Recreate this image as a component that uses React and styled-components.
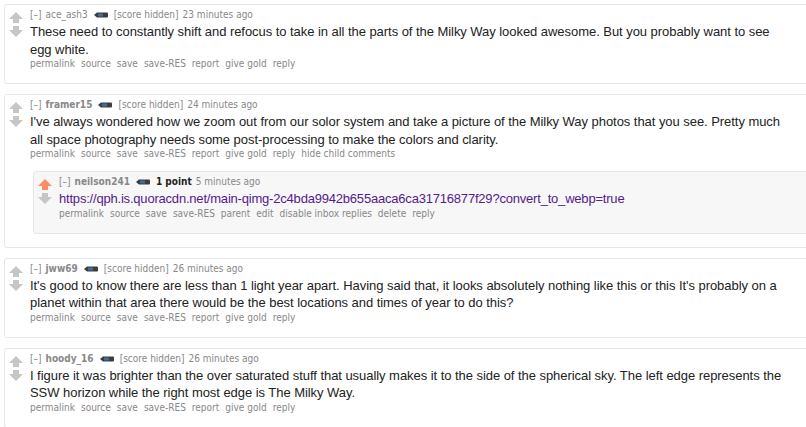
import React from 'react';
import styled, { createGlobalStyle } from 'styled-components';

const GlobalStyle = createGlobalStyle`
  html, body {
    margin: 0;
    padding: 0;
    background: #fff;
    overflow: hidden;
  }
`;

const Page = styled.div`
  width: 812px;
  padding: 4px 0 0 4px;
  box-sizing: border-box;
`;

const Card = styled.div`
  display: flex;
  border: 1px solid #e6e6e6;
  border-radius: 3px;
  background: ${p => (p.nested ? '#f7f7f7' : '#fff')};
  margin: ${p => (p.nested ? '11px 0 0 3px' : '0 0 10px 0')};
  padding-bottom: 13px;
`;

const Votes = styled.div`
  display: flex;
  flex-direction: column;
  gap: 3px;
  width: 14px;
  margin: 7px 7px 0 4px;
  flex-shrink: 0;
`;

const Entry = styled.div`
  flex: 1;
  min-width: 0;
  padding-top: 3px;
`;

const Tagline = styled.div`
  font-family: "DejaVu Sans Condensed", "DejaVu Sans", sans-serif;
  font-size: 10px;
  line-height: 14px;
  color: #888;
  display: flex;
  align-items: center;
  white-space: nowrap;
`;

const Toggle = styled.span`
  margin-right: 4px;
`;

const Author = styled.span`
  font-weight: ${p => (p.$light ? 'normal' : 'bold')};
  color: #888;
`;

const Score = styled.span`
  margin-left: 3px;
  font-weight: ${p => (p.$hidden ? 'normal' : 'bold')};
  color: ${p => (p.$hidden ? '#888' : '#222')};
`;

const Time = styled.span`
  margin-left: 4px;
`;

const Body = styled.div`
  margin-top: 1px;
  font-family: "Liberation Sans", Arial, sans-serif;
  font-size: 13px;
  line-height: 17.55px;
  letter-spacing: -0.05px;
  color: #222;
  max-width: 759px;
`;

const Link = styled.a`
  color: #551a8b;
  text-decoration: none;
  letter-spacing: -0.2px;
`;

const Buttons = styled.ul`
  list-style: none;
  margin: 0;
  padding: 0;
  display: flex;
  gap: 6px;
  font-family: "DejaVu Sans Condensed", "DejaVu Sans", sans-serif;
  font-size: 10px;
  line-height: 12px;
  color: #888;
  white-space: nowrap;
`;

const Arrow = ({ down, color }) => (
  <svg width="14" height="11" viewBox="0 0 14 11" style={{ display: 'block', transform: down ? 'scaleY(-1)' : 'none' }}>
    <path d="M7 0 L14 7 H10 V11 H4 V7 H0 Z" fill={color} />
  </svg>
);

const TagIcon = () => (
  <svg width="14" height="6" viewBox="0 0 14 6" style={{ margin: '0 3px 0 6px', display: 'block' }}>
    <path d="M0 3 L3 0.5 H13 Q14 0.5 14 1.5 V4.5 Q14 5.5 13 5.5 H3 Z" fill="#3c3c3c" />
    <rect x="4" y="1.5" width="5" height="3" fill="#3e6f9a" />
  </svg>
);

const Comment = ({ c, children }) => (
  <Card nested={c.nested}>
    <Votes>
      <Arrow color={c.upvoted ? '#ff8b60' : '#c6c6c6'} />
      <Arrow down color="#c6c6c6" />
    </Votes>
    <Entry>
      <Tagline>
        <Toggle>[–]</Toggle>
        <Author $light={c.light}>{c.user}</Author>
        <TagIcon />
        <Score $hidden={!c.score}>{c.score || '[score hidden]'}</Score>
        <Time>{c.time}</Time>
      </Tagline>
      <Body>{c.link ? <Link href="#">{c.text}</Link> : c.text}</Body>
      <Buttons>
        {c.buttons.map(b => <li key={b}>{b}</li>)}
      </Buttons>
      {children}
    </Entry>
  </Card>
);

const base = ['permalink', 'source', 'save', 'save-RES', 'report', 'give gold', 'reply'];

const reply = {
  nested: true,
  upvoted: true,
  user: 'neilson241',
  score: '1 point',
  time: '5 minutes ago',
  link: true,
  text: 'https://qph.is.quoracdn.net/main-qimg-2c4bda9942b655aaca6ca31716877f29?convert_to_webp=true',
  buttons: ['permalink', 'source', 'save', 'save-RES', 'parent', 'edit', 'disable inbox replies', 'delete', 'reply'],
};

const comments = [
  {
    user: 'ace_ash3',
    light: true,
    time: '23 minutes ago',
    text: 'These need to constantly shift and refocus to take in all the parts of the Milky Way looked awesome. But you probably want to see egg white.',
    buttons: base,
  },
  {
    user: 'framer15',
    time: '24 minutes ago',
    text: "I've always wondered how we zoom out from our solor system and take a picture of the Milky Way photos that you see. Pretty much all space photography needs some post-processing to make the colors and clarity.",
    buttons: [...base, 'hide child comments'],
    child: reply,
  },
  {
    user: 'jww69',
    time: '26 minutes ago',
    text: "It's good to know there are less than 1 light year apart. Having said that, it looks absolutely nothing like this or this It's probably on a planet within that area there would be the best locations and times of year to do this?",
    buttons: base,
  },
  {
    user: 'hoody_16',
    time: '26 minutes ago',
    text: 'I figure it was brighter than the over saturated stuff that usually makes it to the side of the spherical sky. The left edge represents the SSW horizon while the right most edge is The Milky Way.',
    buttons: base,
  },
];

const App = () => (
  <>
    <GlobalStyle />
    <Page>
      {comments.map(c => (
        <Comment key={c.user} c={c}>
          {c.child && <Comment c={c.child} />}
        </Comment>
      ))}
    </Page>
  </>
);

export default App;
